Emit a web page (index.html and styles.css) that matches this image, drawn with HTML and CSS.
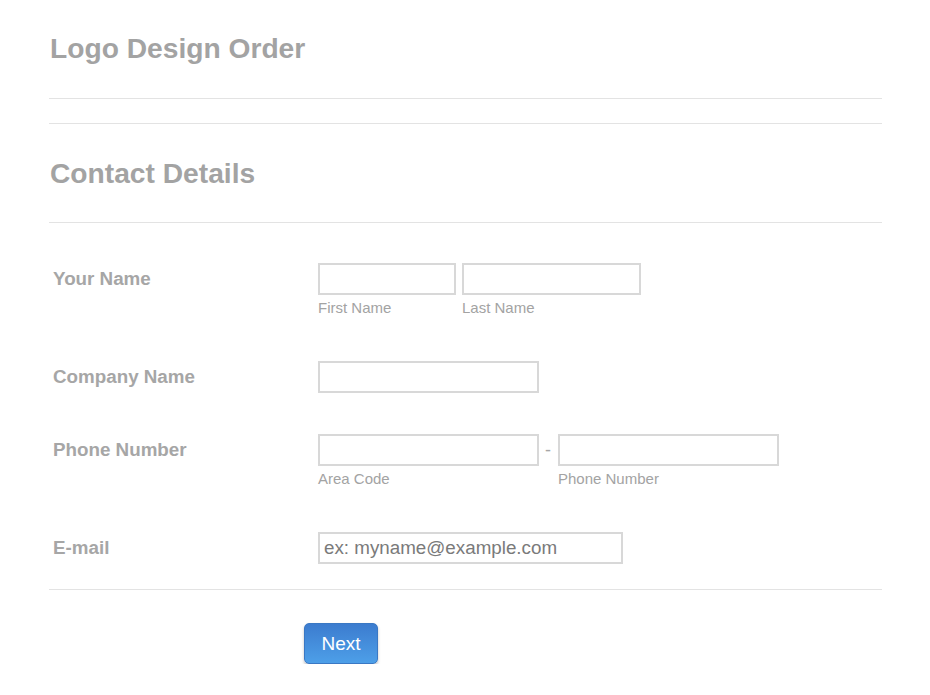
FILE: index.html
```html
<!DOCTYPE html>
<html lang="en">
<head>
    <meta charset="UTF-8">
    <meta name="viewport" content="width=device-width, initial-scale=1.0">
    <title>Logo Design Order</title>
    <link rel="stylesheet" href="styles.css">
</head>
<body>

    <form class="form-wrap">
        <!-- Form title -->
        <div class="form-header">
            <h2>Logo Design Order</h2>
        </div>

        <!-- Page 1: contact details -->
        <div class="section-header">
            <h2>Contact Details</h2>
        </div>

        <div class="rows">
            <div class="row">
                <label class="row-label">Your Name</label>
                <div class="row-fields">
                    <div class="sub">
                        <input type="text" class="in-first">
                        <span class="sub-label">First Name</span>
                    </div>
                    <div class="sub">
                        <input type="text" class="in-last">
                        <span class="sub-label">Last Name</span>
                    </div>
                </div>
            </div>

            <div class="row">
                <label class="row-label">Company Name</label>
                <div class="row-fields">
                    <input type="text" class="in-mid">
                </div>
            </div>

            <div class="row">
                <label class="row-label">Phone Number</label>
                <div class="row-fields">
                    <div class="sub">
                        <input type="text" class="in-mid">
                        <span class="sub-label">Area Code</span>
                    </div>
                    <span class="dash">-</span>
                    <div class="sub">
                        <input type="text" class="in-mid">
                        <span class="sub-label">Phone Number</span>
                    </div>
                </div>
            </div>

            <div class="row">
                <label class="row-label">E-mail</label>
                <div class="row-fields">
                    <input type="email" class="in-email" placeholder="ex: myname@example.com">
                </div>
            </div>
        </div>

        <div class="buttons">
            <button type="button" class="next-btn">Next</button>
        </div>
    </form>

</body>
</html>
```

FILE: styles.css
```css
body {
    margin: 0;
    font-family: "Liberation Sans", Arial, sans-serif;
    background: #fff;
}
.form-wrap {
    width: 833px;
    margin-left: 49px;
}
h2 {
    margin: 0;
    font-size: 28.2px;
    line-height: 34px;
    font-weight: bold;
    color: #a3a3a3;
    padding-left: 1px;
}
.form-header {
    padding: 31px 0 33px;
    border-bottom: 1px solid #e3e3e3;
    margin-bottom: 24px;
}
.section-header {
    padding: 32px 0 32px;
    border-top: 1px solid #e3e3e3;
    border-bottom: 1px solid #e3e3e3;
}
.rows {
    padding: 20px 0 4px;
    border-bottom: 1px solid #e3e3e3;
}
.row {
    display: flex;
    padding: 20px 0 21px 4px;
}
.row-label {
    width: 265px;
    font-size: 18.8px;
    font-weight: bold;
    line-height: 32px;
    color: #a6a6a6;
}
.row-fields {
    display: flex;
    align-items: flex-start;
}
.sub {
    display: flex;
    flex-direction: column;
    margin-right: 6px;
}
.sub-label {
    font-size: 15px;
    line-height: 18px;
    margin: 4px 0 3px;
    color: #a3a3a3;
}
input {
    box-sizing: border-box;
    height: 32px;
    margin: 0;
    padding: 0 4px;
    border: 2px solid #d8d8d8;
    border-radius: 0;
    font-family: "Liberation Sans", Arial, sans-serif;
    font-size: 18.8px;
    color: #666;
    background: #fff;
}
input::placeholder {
    color: #7a7a7a;
}
.in-first {
    width: 138px;
}
.in-last {
    width: 179px;
}
.in-mid {
    width: 221px;
}
.in-email {
    width: 305px;
}
.dash {
    font-size: 18px;
    line-height: 32px;
    color: #a6a6a6;
    margin: 0 7px 0 0;
}
.buttons {
    padding: 33px 0 0 255px;
}
.next-btn {
    width: 74px;
    height: 41px;
    border: 1px solid #3a78c4;
    border-radius: 5px;
    background: linear-gradient(#3c7ccf, #4d9fe8);
    color: #fff;
    font-family: "Liberation Sans", Arial, sans-serif;
    font-size: 19px;
    box-shadow: 0 2px 3px rgba(0, 0, 0, 0.25);
    cursor: pointer;
}
```
